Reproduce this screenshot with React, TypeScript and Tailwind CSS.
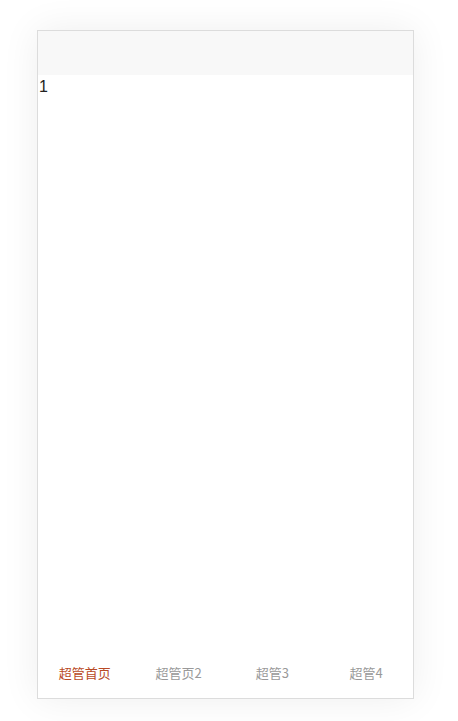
const tabs = ['超管首页', '超管页2', '超管3', '超管4']

export default function App() {
  return (
    <div className="min-h-screen bg-white pt-[30px] pl-[37px] font-['Noto_Sans_CJK_SC','Noto_Sans',sans-serif]">
      <div className="flex h-[669px] w-[377px] flex-col border border-[#dcdcdc] bg-white shadow-[0_0_36px_rgba(0,0,0,0.07)]">
        {/* header */}
        <div className="h-[44px] shrink-0 bg-[#f8f8f8]" />

        {/* content */}
        <div className="flex-1 pt-px text-[16px] leading-[22px] text-[#222] font-['Liberation_Sans',sans-serif]">
          <div className="pl-px">1</div>
        </div>

        {/* tab bar */}
        <div className="grid h-[50px] shrink-0 grid-cols-4 items-center text-[13px]">
          {tabs.map((t, i) => (
            <div
              key={t}
              className={i === 0 ? 'text-center text-[#b94a26]' : 'text-center text-[#999]'}
            >
              {t}
            </div>
          ))}
        </div>
      </div>
    </div>
  )
}
